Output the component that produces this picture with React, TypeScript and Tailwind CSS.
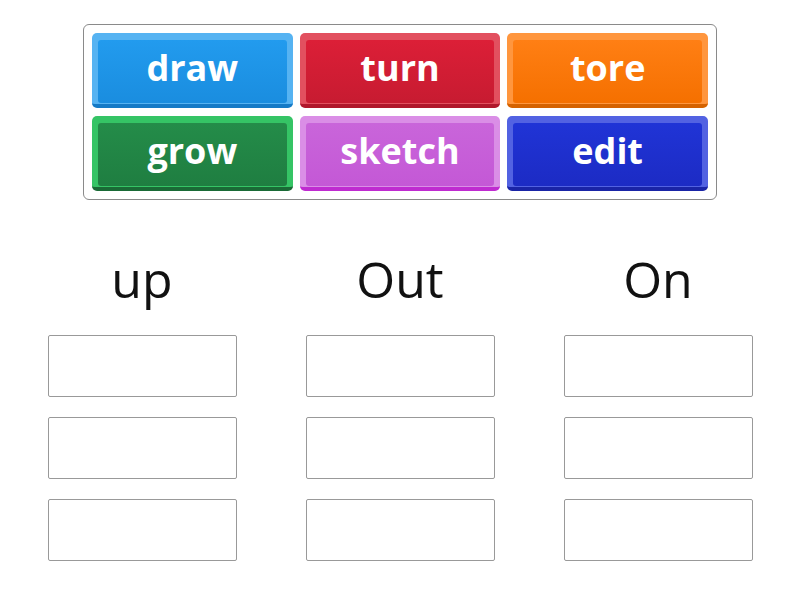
const tiles = [
  { word: "draw", rim: "bg-[#56b3f2]", edge: "border-[#157ac6]", face: "bg-[linear-gradient(to_bottom,#229bee,#1a8ddf)]" },
  { word: "turn", rim: "bg-[#e2505f]", edge: "border-[#b0172b]", face: "bg-[linear-gradient(to_bottom,#dc1f37,#c71b31)]" },
  { word: "tore", rim: "bg-[#ff963e]", edge: "border-[#d56200]", face: "bg-[linear-gradient(to_bottom,#ff7f14,#f57000)]" },
  { word: "grow", rim: "bg-[#35c465]", edge: "border-[#1a6a36]", face: "bg-[linear-gradient(to_bottom,#248c49,#1f7e41)]" },
  { word: "sketch", rim: "bg-[#da8ee6]", edge: "border-[#bf2bd0]", face: "bg-[linear-gradient(to_bottom,#c965da,#c458d6)]" },
  { word: "edit", rim: "bg-[#5262e2]", edge: "border-[#1a24a6]", face: "bg-[linear-gradient(to_bottom,#2034d6,#1c2bc4)]" },
]

const columns = ["up", "Out", "On"]

function Tile({ word, rim, edge, face }: (typeof tiles)[number]) {
  return (
    <div className={`h-[75px] rounded-[5px] border-b-[4px] pt-[7px] px-[6px] pb-[1px] ${rim} ${edge}`}>
      <div className={`h-full rounded-[3px] flex items-center justify-center ${face}`}>
        <span className="text-white font-bold text-[36px] leading-none -mt-[7px]">{word}</span>
      </div>
    </div>
  )
}

export default function App() {
  return (
    <div className="w-[800px] h-[600px] bg-white flex flex-col items-center pt-[24px]" style={{ fontFamily: '"Open Sans", "Noto Sans", sans-serif' }}>
      <div className="w-[634px] border border-[#8a8a8a] rounded-[6px] px-[8px] py-[8px] grid grid-cols-3 gap-x-[7px] gap-y-[8px]">
        {tiles.map(tile => (
          <Tile key={tile.word} {...tile} />
        ))}
      </div>

      <div className="flex gap-[69px] mt-[54px]">
        {columns.map(label => (
          <div key={label} className="w-[189px] flex flex-col items-center">
            <div className="text-[50px] leading-[50px] text-[#111] mb-[31px]">{label}</div>
            <div className="w-full flex flex-col gap-[20px]">
              <div className="h-[62px] border border-[#999] rounded-[2px]" />
              <div className="h-[62px] border border-[#999] rounded-[2px]" />
              <div className="h-[62px] border border-[#999] rounded-[2px]" />
            </div>
          </div>
        ))}
      </div>
    </div>
  )
}
